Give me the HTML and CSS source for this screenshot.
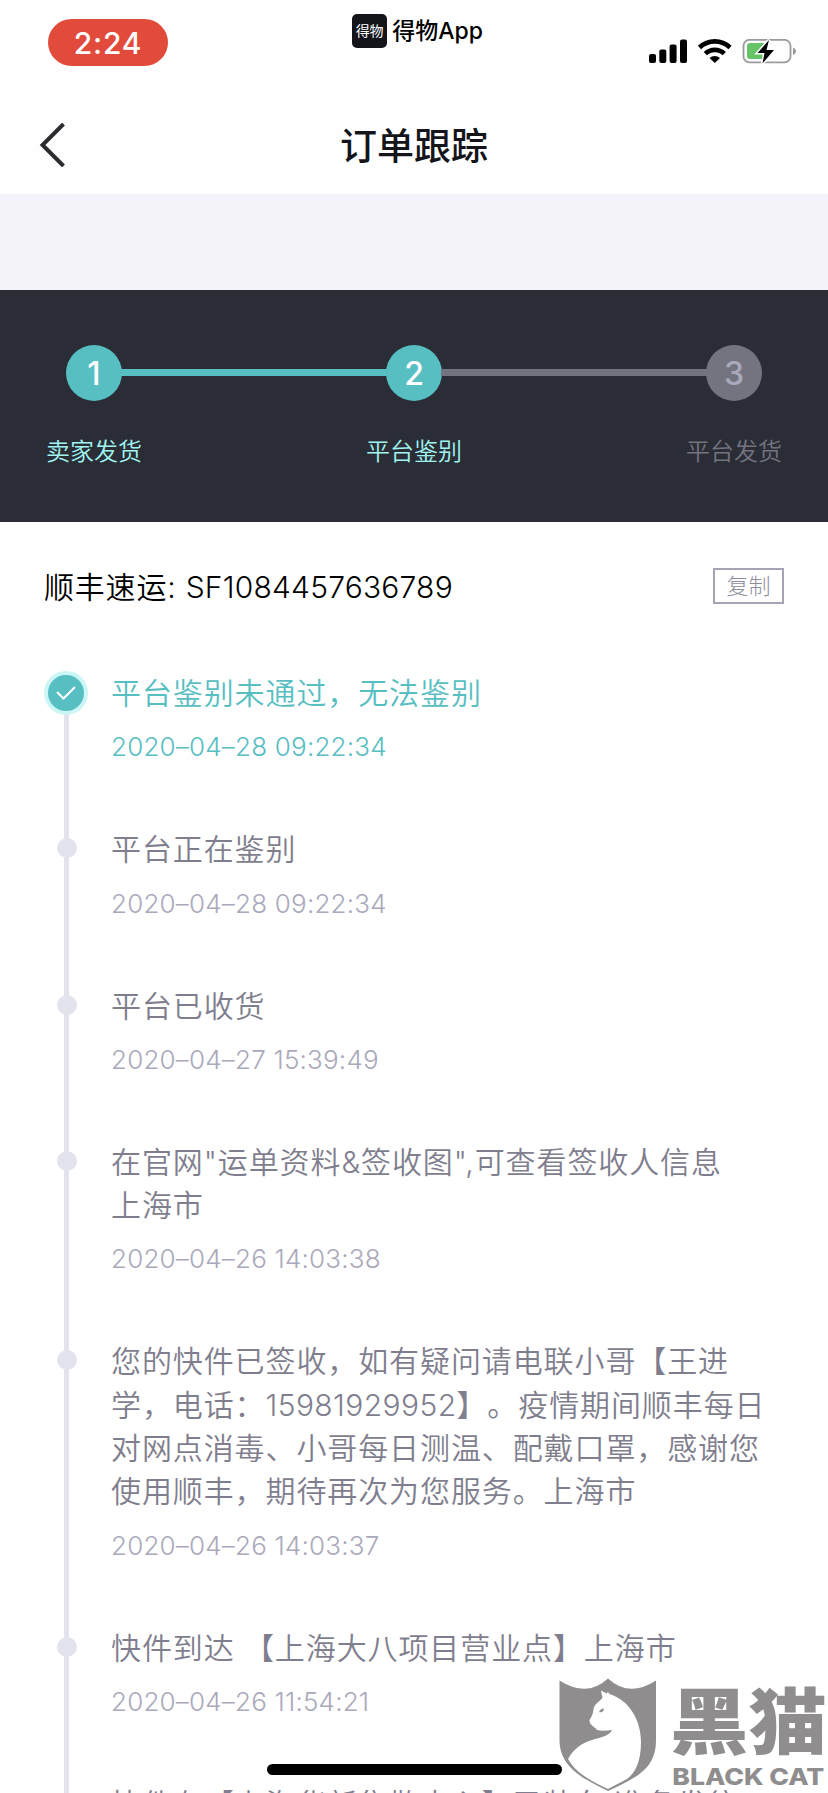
FILE: index.html
```html
<!DOCTYPE html>
<html lang="zh-CN">
<head>
  <meta charset="UTF-8">
  <meta name="viewport" content="width=device-width, initial-scale=1.0">
  <title>订单跟踪</title>
  <link rel="stylesheet" href="styles.css">
</head>
<body>
  <!-- Header -->
  <header>
    <div class="status-bar">
      <span class="clock">2:24</span>
      <div class="app-name">
        <span class="app-logo">得物</span>
        <span>得物App</span>
      </div>
      <svg class="status-icons" width="148" height="26" viewBox="0 0 148 26">
        <rect x="0" y="15" width="7" height="9" rx="2"/>
        <rect x="10.300" y="10.500" width="7" height="13.500" rx="2"/>
        <rect x="20.600" y="5.500" width="7" height="18.500" rx="2"/>
        <rect x="31" y="0.500" width="7" height="23.500" rx="2"/>
        <path d="M50.500 8.500a22 22 0 0 1 30.500 0" fill="none" stroke="#000" stroke-width="4.600"/>
        <path d="M56.300 14.700a13.600 13.600 0 0 1 19 0" fill="none" stroke="#000" stroke-width="4.600"/>
        <path d="M60.500 19a8 8 0 0 1 10.500 0l-5.200 5z"/>
        <rect x="94.500" y="0.800" width="47" height="22.600" rx="6" fill="none" stroke="#9b9b9b" stroke-width="1.800"/>
        <path d="M144 8.500c4 1.500 4 6 0 7.500z" fill="#9b9b9b"/>
        <path d="M101 4h15l-7 11h6l-1 5h-13q-3 0-3-3v-10q0-3 3-3z" fill="#65c466"/>
        <path d="M120 1l-11.500 13h7l-2 10.500 11.500-13.500h-7.500z" stroke="#fff" stroke-width="3" paint-order="stroke"/>
      </svg>
    </div>
    <div class="navbar">
      <svg class="back" width="26" height="44" viewBox="0 0 26 44">
        <path d="M24.500 1L3.500 22 24.500 43" fill="none" stroke="#2b2c30" stroke-width="4"/>
      </svg>
      <h1>订单跟踪</h1>
    </div>
  </header>

  <!-- Progress steps -->
  <section class="steps">
    <div class="step done"><span class="num">1</span><span class="step-label">卖家发货</span></div>
    <div class="bar done"></div>
    <div class="step done"><span class="num">2</span><span class="step-label">平台鉴别</span></div>
    <div class="bar"></div>
    <div class="step"><span class="num">3</span><span class="step-label">平台发货</span></div>
  </section>

  <!-- Tracking number -->
  <section class="tracking">
    <p>顺丰速运: <span class="code">SF1084457636789</span></p>
    <button type="button">复制</button>
  </section>

  <!-- Timeline -->
  <ul class="timeline">
    <li class="current">
      <span class="dot"><svg width="20" height="14" viewBox="0 0 20 14"><path d="M1 6l6.500 6.500L19 1" fill="none" stroke="#fff" stroke-width="2"/></svg></span>
      <p class="event">平台鉴别未通过，无法鉴别</p>
      <time>2020–04–28 09:22:34</time>
    </li>
    <li>
      <span class="dot"></span>
      <p class="event">平台正在鉴别</p>
      <time>2020–04–28 09:22:34</time>
    </li>
    <li>
      <span class="dot"></span>
      <p class="event">平台已收货</p>
      <time>2020–04–27 15:39:49</time>
    </li>
    <li>
      <span class="dot"></span>
      <p class="event">在官网"运单资料&amp;签收图",可查看签收人信息<br>上海市</p>
      <time>2020–04–26 14:03:38</time>
    </li>
    <li>
      <span class="dot"></span>
      <p class="event">您的快件已签收，如有疑问请电联小哥【王进<br>学，电话：<span class="phone">15981929952</span>】。疫情期间顺丰每日<br>对网点消毒、小哥每日测温、配戴口罩，感谢您<br>使用顺丰，期待再次为您服务。上海市</p>
      <time>2020–04–26 14:03:37</time>
    </li>
    <li>
      <span class="dot"></span>
      <p class="event">快件到达 【上海大八项目营业点】上海市</p>
      <time>2020–04–26 11:54:21</time>
    </li>
    <li>
      <span class="dot"></span>
      <p class="event">快件在【上海华新集散中心】已装车,准备发往</p>
    </li>
  </ul>

  <div class="home-bar"></div>

  <!-- Watermark -->
  <div class="watermark">
    <svg width="98" height="114" viewBox="0 0 98 114">
      <path d="M0.500 2.500Q28 20 49 0.500 70 20 97 2.500V62C97 92 76 100 49 113 22 100 0.500 88 0.500 62z" fill="#8f8d8e"/>
      <path d="M42 12.500l5.500 3 1.500-1.500 1.500 2C70 22 82 42 82 64 82 84 76 95 68 101L49 111C30 102 17 95 9 81 16 68 27 63 40 60 47 58 51 56 53 52 47 53 42 53 38 52 36 49 30 47 30.500 42 34 37 34 34 35 29 37 25 41 23 43.500 20z" fill="#fff"/>
      <path d="M40 34q2-4 5-3.500-1 5-5 3.500z" fill="#8f8d8e"/>
    </svg>
    <div class="brand">
      <span class="brand-cn">黑猫</span>
      <span class="brand-en">BLACK CAT</span>
    </div>
  </div>
</body>
</html>
```
FILE: styles.css
```css
* {
    margin: 0;
    padding: 0;
    box-sizing: border-box;
}

html {
    overflow: hidden;
}

body {
    position: relative;
    width: 828px;
    height: 1793px;
    overflow: hidden;
    background-color: #fff;
    font-family: Inter, "Noto Sans CJK SC", sans-serif;
    color: #000;
    text-spacing-trim: space-all;
}

/* Header */
header {
    height: 290px;
    border-bottom: 96px solid #f4f3f9;
    background-color: #fefefe;
}

.status-bar {
    display: grid;
    grid-template-columns: 1fr auto 1fr;
    align-items: start;
    height: 98px;
    padding: 13px 31px 0 48px;
}

.clock {
    width: 120px;
    height: 47px;
    margin-top: 6px;
    border-radius: 24px;
    background-color: #e24b3c;
    color: #fff;
    font-size: 30px;
    font-weight: 550;
    line-height: 48px;
    text-align: center;
    letter-spacing: 0.8px;
}

.app-name {
    display: flex;
    align-items: center;
    gap: 5px;
    margin-left: -10px;
    font-size: 23px;
    font-weight: 500;
    line-height: 36px;
}

.app-logo {
    width: 35px;
    height: 34px;
    border-radius: 5px;
    background-color: #14151a;
    color: #fff;
    font-size: 14px;
    font-weight: 400;
    line-height: 33px;
    text-align: center;
}

.status-icons {
    justify-self: end;
    margin-top: 26px;
}

.navbar {
    display: grid;
    grid-template-columns: 1fr auto 1fr;
    align-items: center;
    height: 96px;
    padding: 0 39px;
}

.back {
    margin-top: -2px;
}

.navbar h1 {
    padding-top: 2px;
    color: #14151a;
    font-size: 37px;
    font-weight: 500;
    line-height: 60px;
}

/* Steps */
.steps {
    display: flex;
    height: 232px;
    padding: 55px 44px 0;
    background-color: #2b2d36;
}

.step {
    display: flex;
    flex-direction: column;
    align-items: center;
    width: 100px;
    color: #737480;
}

.num {
    width: 56px;
    height: 56px;
    border-radius: 50%;
    background-color: #737480;
    color: #aaa9bb;
    font-size: 32px;
    font-weight: 500;
    line-height: 57px;
    text-align: center;
}

.step-label {
    margin-top: 33px;
    font-size: 24px;
    font-weight: 350;
    line-height: 36px;
    white-space: nowrap;
}

.step.done {
    color: #a0f4f1;
}

.step.done .num {
    background-color: #57bec2;
    color: #fff;
}

.bar {
    flex: 1;
    height: 7px;
    margin: 24px -23px 0;
    background-color: #737480;
}

.bar.done {
    background-color: #57bec2;
}

/* Tracking number */
.tracking {
    display: flex;
    justify-content: space-between;
    align-items: center;
    height: 128px;
    padding: 0 44px;
    font-size: 30px;
    font-weight: 350;
    letter-spacing: 0.8px;
}

.tracking p {
    margin-top: -2px;
}

.code {
    letter-spacing: 0.2px;
}

.tracking button {
    width: 71px;
    height: 36px;
    border: 2px solid #a5a4b4;
    background-color: #fff;
    color: #8d8c9c;
    font-family: inherit;
    font-size: 22px;
    font-weight: 300;
    line-height: 33px;
}

/* Timeline */
.timeline {
    padding: 22px 44px 0;
    list-style: none;
}

.timeline li {
    position: relative;
    padding: 0 0 65px 67px;
}

.timeline li::before {
    content: "";
    position: absolute;
    top: 22px;
    bottom: -22px;
    left: 20px;
    width: 5px;
    background-color: #e3e3ee;
}

.dot {
    position: absolute;
    top: 10px;
    left: 13px;
    width: 20px;
    height: 20px;
    border-radius: 50%;
    background-color: #e3e3ee;
}

.event {
    color: #7f7e8e;
    font-size: 30px;
    font-weight: 350;
    line-height: 43.3px;
    letter-spacing: 0.9px;
    white-space: nowrap;
}

.phone {
    letter-spacing: 0.4px;
}

time {
    display: block;
    margin-top: 16px;
    color: #aaa9bb;
    font-size: 26px;
    font-weight: 350;
    line-height: 32px;
    letter-spacing: 0.2px;
}

.current .dot {
    display: flex;
    justify-content: center;
    align-items: center;
    top: -1px;
    left: 0;
    width: 44px;
    height: 44px;
    border: 4px solid #cbf6f5;
    background-color: #57bec2;
}

.current .event,
.current time {
    color: #57bec2;
}

.home-bar {
    position: absolute;
    left: 267px;
    bottom: 18px;
    width: 295px;
    height: 11px;
    border-radius: 6px;
    background-color: #000;
}

/* Watermark */
.watermark {
    position: absolute;
    left: 559px;
    top: 1678px;
    display: flex;
    gap: 13px;
    color: #8f8d8e;
}

.brand {
    display: flex;
    flex-direction: column;
}

.brand-cn {
    font-size: 72px;
    font-weight: 900;
    line-height: 87px;
    transform: scaleX(1.09);
    transform-origin: left;
}

.brand-en {
    padding-left: 2px;
    font-size: 23.5px;
    font-weight: 800;
    line-height: 24px;
    white-space: nowrap;
    transform: scaleX(1.13);
    transform-origin: left;
}
```
